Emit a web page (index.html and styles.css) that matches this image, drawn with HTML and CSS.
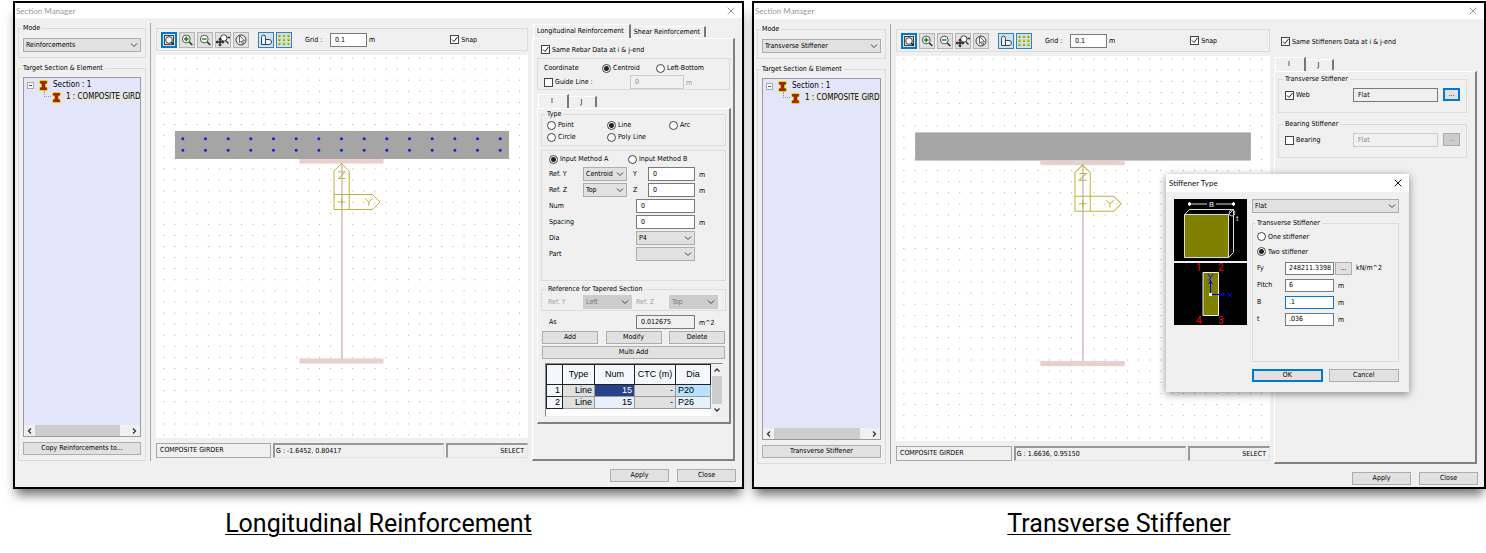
FILE: index.html
```
<!DOCTYPE html>
<html lang="en">
<head>
<meta charset="utf-8">
<title>Section Manager</title>
<link rel="stylesheet" href="styles.css">
</head>
<body>
<svg class="defs" aria-hidden="true">
  <symbol id="i-fit" viewBox="0 0 12 12"><rect x="1.500" y="1.500" width="9" height="9" fill="#d8d8d8" stroke="#444"/><circle cx="6" cy="6" r="3.300" fill="#fafafa" stroke="#444"/><path d="M8.300 8.300l2.200 2.200" stroke="#111" stroke-width="1.600"/></symbol>
  <symbol id="i-in" viewBox="0 0 14 14"><circle cx="6.300" cy="6" r="3.900" fill="#fff" stroke="#555"/><path d="M9.300 9l3 3" stroke="#333" stroke-width="1.700"/><path d="M4 6h4.600M6.300 3.700v4.600" stroke="#0a8a0a" stroke-width="1.600"/></symbol>
  <symbol id="i-out" viewBox="0 0 14 14"><circle cx="6.300" cy="6" r="3.900" fill="#fff" stroke="#555"/><path d="M9.300 9l3 3" stroke="#333" stroke-width="1.700"/><path d="M4 6h4.600" stroke="#0a8a0a" stroke-width="1.400"/></symbol>
  <symbol id="i-dyn" viewBox="0 0 14 14"><circle cx="7.800" cy="5" r="3.200" fill="#fff" stroke="#444"/><path d="M10 8l2.500 2.500M11.500 4.500H14" stroke="#333" stroke-width="1.400"/><path d="M4 5.500v7M.5 9h7" stroke="#222" stroke-width="1.400"/><path d="M4 4.500l-2 2h4zM4 13.500l-2-2h4zM-.5 9l2-2v4zM8.500 9l-2-2v4z" fill="#222"/></symbol>
  <symbol id="i-sel" viewBox="0 0 14 14"><circle cx="7" cy="7" r="5" fill="#eee" stroke="#444"/><path d="M5.500 2.500v7l1.600-1.400 1.300 2.900 1.300-.6-1.300-2.700h2.100z" fill="#fff" stroke="#444" stroke-width=".8"/></symbol>
  <symbol id="i-shape" viewBox="0 0 14 14"><path d="M2.500 11.500v-7Q2.500 2 4.500 2t2 2.500v7M6.500 6.500H10q2.500 0 2.500 2.500t-2.500 2.500H2.500" fill="#eef6fc" stroke="#3a444c"/></symbol>
  <symbol id="i-grid" viewBox="0 0 14 14"><path d="M2.500 1.500v12M7 1.500v12M11.500 1.500v12" stroke="#c8c400" stroke-width="2.600" stroke-dasharray="2.500 1.500"/><path d="M2.500 3v10M7 3v10M11.500 3v10" stroke="#77771c" stroke-dasharray="1 3"/></symbol>
  <symbol id="i-beam" viewBox="0 0 10 12"><path d="M0 0h10v4H8v4h2v4H0V8h2V4H0z" fill="#f1ee1b"/><path d="M1.500 1.300h7v2.200h-2v5h2v2.200h-7V8.500h2v-5h-2z" fill="#d30c0c" stroke="#421" stroke-width=".7"/></symbol>
  <symbol id="i-x" viewBox="0 0 8 8"><path d="M.7.7l6.600 6.600M7.300.7L.7 7.300" stroke="currentColor" fill="none"/></symbol>
  <symbol id="i-left" viewBox="0 0 8 8"><path d="M5.500 1.500L3 4l2.500 2.500" stroke="#333" stroke-width="1.300" fill="none"/></symbol>
  <symbol id="i-right" viewBox="0 0 8 8"><path d="M2.500 1.500L5 4 2.500 6.500" stroke="#333" stroke-width="1.300" fill="none"/></symbol>
  <symbol id="i-up" viewBox="0 0 8 8"><path d="M1.500 5.500L4 3l2.500 2.500" stroke="#333" stroke-width="1.300" fill="none"/></symbol>
  <symbol id="i-down" viewBox="0 0 8 8"><path d="M1.500 2.500L4 5l2.500-2.500" stroke="#333" stroke-width="1.300" fill="none"/></symbol>
  <pattern id="dots" width="11.12" height="11.09" patternUnits="userSpaceOnUse" x="6.800" y="2.500"><rect width="1" height="1" fill="#f08c8c"/></pattern>
  <symbol id="girder" viewBox="0 0 371 383">
    <rect x="143" y="104" width="84" height="4.500" fill="#e6d0d0"/>
    <rect x="184.500" y="108" width="1.800" height="196" fill="#dfc4c6"/>
    <rect x="143" y="303.500" width="84" height="5" fill="#e6d0d0"/>
    <g fill="none" stroke="#b9b53c"><path d="M177.500 154.500V116l7.500-7.500 7.700 7.500v38.500M177.500 154.500H216l7.500-7.500-7.500-7.500h-38.500"/><path d="M181.500 147h7.500M185.300 143.500v7.500M181.700 117h7l-7 6.500h7.300M208.500 143.500l3.800 3.500 3.700-3.500M212.300 147v4"/></g>
  </symbol>
</svg>

<main class="page">
<figure class="shot">
<section class="window">
  <header class="titlebar"><span>Section Manager</span><button class="close" aria-label="Close window"><svg><use href="#i-x"/></svg></button></header>
  <div class="body">
    <aside class="side">
      <fieldset><legend>Mode</legend>
        <select class="field wide" aria-label="Mode"><option>Reinforcements</option></select>
      </fieldset>
      <fieldset class="grow"><legend>Target Section &amp; Element</legend>
        <div class="tree">
          <ul>
            <li><span class="expander"></span><svg class="beam"><use href="#i-beam"/></svg><span>Section : 1</span></li>
            <li class="child"><span class="elbow"></span><svg class="beam"><use href="#i-beam"/></svg><span class="picked">1 : COMPOSITE GIRD</span></li>
          </ul>
          <div class="hscroll"><svg><use href="#i-left"/></svg><i></i><svg><use href="#i-right"/></svg></div>
        </div>
        <button class="btn">Copy Reinforcements to...</button>
      </fieldset>
    </aside>
    <div class="splitter"></div>
    <div class="center">
      <div class="toolbar">
        <button class="tool focus" aria-label="Zoom fit"><svg><use href="#i-fit"/></svg></button>
        <button class="tool" aria-label="Zoom in"><svg><use href="#i-in"/></svg></button>
        <button class="tool" aria-label="Zoom out"><svg><use href="#i-out"/></svg></button>
        <button class="tool" aria-label="Dynamic zoom"><svg><use href="#i-dyn"/></svg></button>
        <button class="tool" aria-label="Select"><svg><use href="#i-sel"/></svg></button>
        <button class="tool on first" aria-label="Show section"><svg><use href="#i-shape"/></svg></button>
        <button class="tool on" aria-label="Show grid"><svg><use href="#i-grid"/></svg></button>
        <label class="gridlabel" for="g1">Grid :</label><input class="field gridsize" id="g1" value="0.1"><span>m</span>
        <label class="check snap"><input type="checkbox" checked>Snap</label>
      </div>
      <svg class="canvas" viewBox="0 0 371 383">
        <rect x="18.500" y="76" width="334" height="28" fill="#a5a5a5"/>
        <rect width="371" height="383" fill="url(#dots)"/>
        <use href="#girder" width="371" height="383"/>
        <g fill="none" stroke="#1c1ccc" stroke-width="3" stroke-linecap="round" stroke-dasharray="0 22.670"><path d="M26.300 83.700H344.500M26.300 95.300H344.500"/></g>
      </svg>
      <div class="status"><span>COMPOSITE GIRDER</span><span>G : -1.6452, 0.80417</span><span>SELECT</span></div>
    </div>
    <div class="right">
      <div class="tabs"><button class="tab active">Longitudinal Reinforcement</button><button class="tab">Shear Reinforcement</button></div>
      <div class="panel outer">
        <label class="check same"><input type="checkbox" checked>Same Rebar Data at i &amp; j-end</label>
        <div class="group coord">
          <span>Coordinate</span><label class="check"><input type="radio" name="co" checked>Centroid</label><label class="check"><input type="radio" name="co">Left-Bottom</label>
          <label class="check"><input type="checkbox">Guide Line :</label><input class="field off guide" value="0" disabled aria-label="Guide line"><span class="unit dim">m</span>
        </div>
        <div class="tabs small"><button class="tab active">I</button><button class="tab">J</button></div>
        <div class="panel inner">
          <fieldset class="type"><legend>Type</legend>
            <label class="check"><input type="radio" name="ty">Point</label><label class="check"><input type="radio" name="ty" checked>Line</label><label class="check"><input type="radio" name="ty">Arc</label>
            <label class="check"><input type="radio" name="ty">Circle</label><label class="check"><input type="radio" name="ty">Poly Line</label>
          </fieldset>
          <div class="group method">
            <div class="ways"><label class="check"><input type="radio" name="me" checked>Input Method A</label><label class="check"><input type="radio" name="me">Input Method B</label></div>
            <div class="row"><label for="ry">Ref. Y</label><select class="field ref" id="ry"><option>Centroid</option></select><label class="axis" for="vy">Y</label><input class="field short" id="vy" value="0"><span class="unit">m</span></div>
            <div class="row"><label for="rz">Ref. Z</label><select class="field ref" id="rz"><option>Top</option></select><label class="axis" for="vz">Z</label><input class="field short" id="vz" value="0"><span class="unit">m</span></div>
            <div class="row"><label for="nu">Num</label><input class="field value" id="nu" value="0"><span class="unit"></span></div>
            <div class="row"><label for="sp">Spacing</label><input class="field value" id="sp" value="0"><span class="unit">m</span></div>
            <div class="row"><label for="di">Dia</label><select class="field value" id="di"><option>P4</option></select><span class="unit"></span></div>
            <div class="row"><label for="pa">Part</label><select class="field value" id="pa"><option></option></select><span class="unit"></span></div>
          </div>
          <fieldset class="taper"><legend>Reference for Tapered Section</legend>
            <label class="dim" for="ty1">Ref. Y</label><select class="field" id="ty1" disabled><option>Left</option></select><label class="dim" for="tz1">Ref. Z</label><select class="field" id="tz1" disabled><option>Top</option></select>
          </fieldset>
          <div class="row as"><label for="as">As</label><input class="field value plain" id="as" value="0.012675" readonly><span class="unit">m^2</span></div>
          <div class="actions"><button class="btn">Add</button><button class="btn">Modify</button><button class="btn">Delete</button><button class="btn all">Multi Add</button></div>
          <div class="sheet">
            <table>
              <thead><tr><th class="c0"></th><th class="c1">Type</th><th class="c2">Num</th><th class="c3">CTC (m)</th><th>Dia</th></tr></thead>
              <tbody>
                <tr><th>1</th><td class="ro">Line</td><td class="cursor">15</td><td class="ro">-</td><td class="dia hot">P20</td></tr>
                <tr><th>2</th><td class="ro">Line</td><td>15</td><td class="ro">-</td><td class="dia">P26</td></tr>
              </tbody>
            </table>
            <div class="vscroll"><svg><use href="#i-up"/></svg><i></i><svg><use href="#i-down"/></svg></div>
          </div>
        </div>
      </div>
    </div>
  </div>
  <footer class="foot"><button class="btn">Apply</button><button class="btn">Close</button></footer>
</section>
<figcaption>Longitudinal Reinforcement</figcaption>
</figure>

<figure class="shot">
<section class="window second">
  <header class="titlebar"><span>Section Manager</span><button class="close" aria-label="Close window"><svg><use href="#i-x"/></svg></button></header>
  <div class="body">
    <aside class="side">
      <fieldset><legend>Mode</legend>
        <select class="field wide" aria-label="Mode"><option>Transverse Stiffener</option></select>
      </fieldset>
      <fieldset class="grow"><legend>Target Section &amp; Element</legend>
        <div class="tree">
          <ul>
            <li><span class="expander"></span><svg class="beam"><use href="#i-beam"/></svg><span>Section : 1</span></li>
            <li class="child"><span class="elbow"></span><svg class="beam"><use href="#i-beam"/></svg><span class="picked">1 : COMPOSITE GIRD</span></li>
          </ul>
          <div class="hscroll"><svg><use href="#i-left"/></svg><i></i><svg><use href="#i-right"/></svg></div>
        </div>
        <button class="btn">Transverse Stiffener</button>
      </fieldset>
    </aside>
    <div class="splitter"></div>
    <div class="center">
      <div class="toolbar">
        <button class="tool focus" aria-label="Zoom fit"><svg><use href="#i-fit"/></svg></button>
        <button class="tool" aria-label="Zoom in"><svg><use href="#i-in"/></svg></button>
        <button class="tool" aria-label="Zoom out"><svg><use href="#i-out"/></svg></button>
        <button class="tool" aria-label="Dynamic zoom"><svg><use href="#i-dyn"/></svg></button>
        <button class="tool" aria-label="Select"><svg><use href="#i-sel"/></svg></button>
        <button class="tool on first" aria-label="Show section"><svg><use href="#i-shape"/></svg></button>
        <button class="tool on" aria-label="Show grid"><svg><use href="#i-grid"/></svg></button>
        <label class="gridlabel" for="g2">Grid :</label><input class="field gridsize" id="g2" value="0.1"><span>m</span>
        <label class="check snap"><input type="checkbox" checked>Snap</label>
      </div>
      <svg class="canvas" viewBox="0 0 371 383">
        <rect x="18.500" y="76" width="334" height="28" fill="#a5a5a5"/>
        <rect width="371" height="383" fill="url(#dots)"/>
        <use href="#girder" width="371" height="383"/>
      </svg>
      <div class="status"><span>COMPOSITE GIRDER</span><span>G : 1.6636, 0.95150</span><span>SELECT</span></div>
    </div>
    <div class="right">
      <label class="check same"><input type="checkbox" checked>Same Stiffeners Data at i &amp; j-end</label>
      <div class="tabs small"><button class="tab active">I</button><button class="tab">J</button></div>
      <div class="panel outer">
        <fieldset class="stiff"><legend>Transverse Stiffener</legend>
          <label class="check"><input type="checkbox" checked>Web</label><input class="field plain" value="Flat" readonly aria-label="Web stiffener"><button class="btn dots focus">...</button>
        </fieldset>
        <fieldset class="stiff"><legend>Bearing Stiffener</legend>
          <label class="check"><input type="checkbox">Bearing</label><input class="field off" value="Flat" disabled aria-label="Bearing stiffener"><button class="btn dots" disabled>...</button>
        </fieldset>
      </div>
    </div>
  </div>
  <footer class="foot"><button class="btn">Apply</button><button class="btn">Close</button></footer>

  <div class="dialog" role="dialog" aria-label="Stiffener Type">
    <header class="titlebar"><span>Stiffener Type</span><button class="close" aria-label="Close dialog"><svg><use href="#i-x"/></svg></button></header>
    <div class="dialog-body">
      <div class="previews">
        <svg viewBox="0 0 73 62"><rect width="73" height="62"/><path d="M10.500 15.500h44v43h-44z" fill="#808000" stroke="#ddd"/><path d="M10.500 15.500l5-5h44l-5 5M59.500 10.500v43l-5 5M15.500 3v4M59.500 3v4M15.500 5H33M42 5h17.500" fill="none" stroke="#ddd"/><path d="M14 5h3M58 5h3" stroke="#fff" stroke-width="2.500"/><circle cx="58" cy="14" r="3" fill="none" stroke="#bbb"/><text x="35" y="8" fill="#eee" font-size="8">B</text><text x="62" y="22" fill="#ddd" font-size="8">t</text></svg>
        <svg viewBox="0 0 73 62"><rect width="73" height="62"/><path d="M29 9.500h15.500v43H29z" fill="#808000" stroke="#eee"/><g fill="#f00" font-size="10"><text x="22" y="8">1</text><text x="44" y="8">2</text><text x="22" y="61">4</text><text x="44" y="61">3</text></g><g fill="none" stroke="#00f"><path d="M36.500 31V17M36.500 31.500H50M34.500 21l2-3 2 3M48 29.500l3 2-3 2M53.500 29.500l5 5M58.500 29.500l-5 5M34 11l2.500 3.500L39 11M36.500 14.500l-1.500 3"/></g><rect x="35" y="30" width="3" height="3" fill="#fff"/></svg>
      </div>
      <div class="form">
        <select class="field wide" aria-label="Stiffener type"><option>Flat</option></select>
        <fieldset><legend>Transverse Stiffener</legend>
          <label class="check"><input type="radio" name="st">One stiffener</label>
          <label class="check"><input type="radio" name="st" checked>Two stiffener</label>
          <div class="line"><label for="fy">Fy</label><input class="field" id="fy" value="248211.3398"><button class="btn dots">...</button><span>kN/m^2</span></div>
          <div class="line"><label for="pi">Pitch</label><input class="field" id="pi" value="6"><span class="unit">m</span></div>
          <div class="line"><label for="bb">B</label><input class="field editing" id="bb" value=".1"><span class="unit">m</span></div>
          <div class="line"><label for="tt">t</label><input class="field" id="tt" value=".036"><span class="unit">m</span></div>
        </fieldset>
        <div class="confirm"><button class="btn focus">OK</button><button class="btn">Cancel</button></div>
      </div>
    </div>
  </div>
</section>
<figcaption>Transverse Stiffener</figcaption>
</figure>
</main>
</body>
</html>
```
FILE: styles.css
```
* { box-sizing: border-box; }
body { margin: 0; background: #fff; color: #000; }
.defs { position: absolute; width: 0; height: 0; }
.page { min-height: 100vh; display: grid; grid-template-columns: 731fr 734fr; gap: 8px; padding: 1px 0 0 13px; }
.shot { margin: 0; display: flex; flex-direction: column; min-width: 0; }
figcaption { height: 64px; padding-top: 20px; text-align: center; font: 25px/30px Roboto, sans-serif; color: #000; text-decoration: underline; text-decoration-thickness: 1px; text-underline-offset: 2px; }

.window { position: relative; flex: 1; display: flex; flex-direction: column; border: 2px solid #000; background: #f0f0f0; box-shadow: 0 9px 10px -3px rgba(0, 0, 0, .55); font: 7px/10px "DejaVu Sans Condensed", "DejaVu Sans", sans-serif; }
button, input, select { font: inherit; color: inherit; margin: 0; padding: 0; }
.titlebar { height: 15px; display: flex; align-items: center; justify-content: space-between; padding: 0 7px 0 1px; background: #fff; color: #9a9a9a; font: 8px/10px Lato, sans-serif; }
.close { border: 0; background: none; display: flex; }
.close svg { width: 8px; height: 8px; }
.body { flex: 1; display: flex; padding: 5px 7px 0 3px; }
.side { width: 128px; display: flex; flex-direction: column; gap: 5px; }
fieldset { margin: 0; border: 1px solid #dcdcdc; padding: 5px 4px; min-width: 0; }
legend { padding: 0 2px; margin-left: -2px; line-height: 10px; }
.grow { flex: 1; display: flex; flex-direction: column; padding: 4px 4px 5px; }
.field { height: 14px; border: 1px solid #7a7a7a; border-radius: 0; background: #fff; padding: 0 0 0 4px; min-width: 0; outline: 0; }
select.field { appearance: none; border-color: #adadad; padding: 0 12px 0 2px; background: #e1e1e1 url("data:image/svg+xml,%3Csvg xmlns='http://www.w3.org/2000/svg' width='8' height='6'%3E%3Cpath d='M1 1.500l3 3 3-3' fill='none' stroke='%23444'/%3E%3C/svg%3E") no-repeat right 2px center; }
select.field:disabled { background-color: #ccc; border-color: #ccc; color: #777; opacity: 1; }
.wide { width: 100%; display: block; }
.off { background: #f0f0f0; border-color: #ccc; color: #888; }
.plain { background: #f0f0f0; }
.dim { color: #a0a0a0; }
.btn { height: 13px; border: 1px solid #adadad; background: #e1e1e1; line-height: 11px; text-align: center; }
.btn.focus { border: 2px solid #0078d7; line-height: 9px; }
.tree { flex: 1; display: flex; flex-direction: column; justify-content: space-between; margin-bottom: 5px; border: 1px solid #9a9aa0; background: #e4e4fa; font-size: 8px; }
.tree ul { list-style: none; margin: 0; padding: 1px 0 0 3px; overflow: hidden; }
.tree li { display: flex; align-items: center; height: 12px; white-space: nowrap; }
.expander { width: 7px; height: 7px; border: 1px solid #aaa; background: linear-gradient(#555, #555) center / 3px 1px no-repeat #fff; margin-right: 5px; }
.beam { width: 9px; height: 11px; margin-right: 5px; flex: none; }
.child { padding-left: 17px; }
.elbow { width: 7px; height: 6px; border: 1px dotted #999; border-width: 0 0 1px 1px; margin: 0 1px 6px 0; flex: none; }
.picked { background: #e6e6e6; flex: 1; }
.hscroll { display: flex; align-items: center; height: 11px; background: #f0f0f0; justify-content: space-between; }
.hscroll svg { width: 11px; height: 8px; }
.hscroll i { height: 11px; flex: 1; margin-right: 9px; background: #cdcdcd; }
.splitter { width: 1px; background: #a6a6a6; margin: 0 5px 0 4px; }
.center { flex: 1; min-width: 0; display: flex; flex-direction: column; }
.toolbar { margin: 5px 0 4px; height: 23px; border: 1px solid #dcdcdc; display: flex; align-items: center; padding: 0 4px; gap: 2px; }
.tool { width: 16px; height: 16px; border: 1px solid #b4b4b4; background: #e1e1e1; display: flex; }
.tool svg { width: 14px; height: 14px; }
.tool.focus { border: 2px solid #0078d7; }
.tool.focus svg { width: 12px; height: 12px; }
.tool.on { border-color: #3c7fb1; background: #cce4f7; }
.tool.first { margin-left: 7px; }
.gridlabel { width: 23px; margin-left: 11px; white-space: nowrap; }
.gridsize { width: 37px; }
.check { display: flex; align-items: center; gap: 2px; white-space: nowrap; }
.check input { appearance: none; width: 9px; height: 9px; border: 1px solid #444; background: #fff; flex: none; }
.check input[type=checkbox]:checked { background: #fff url("data:image/svg+xml,%3Csvg xmlns='http://www.w3.org/2000/svg' width='7' height='7'%3E%3Cpath d='M1 3.500l2 2L6.500 1' fill='none' stroke='%23222'/%3E%3C/svg%3E") center no-repeat; }
.check input[type=radio] { border-radius: 50%; }
.check input[type=radio]:checked { background: radial-gradient(#222 2px, #fff 3px); }
.snap { margin: 0 auto 0 73px; }
.canvas { flex: 1 1 0; min-height: 0; width: 100%; background: #fff; }
.status { display: grid; grid-template-columns: 115fr 171fr 82fr; gap: 2px; margin: 5px 0 3px; }
.status span { height: 15px; line-height: 12px; padding: 0 3px 0 1px; border: 1px solid #e4e4e4; border-top: 2px solid #999; border-left: 2px solid #999; }
.status span:first-child { border: 1px solid #a8a8a8; line-height: 13px; padding-left: 3px; }
.status span:last-child { text-align: right; }
.right { width: 203px; margin-left: 4px; display: flex; flex-direction: column; }
.tabs { display: flex; align-items: flex-end; height: 15px; padding-left: 1px; }
.tab { border: 0; border-top: 1px solid #fff; border-right: 2px solid #777; background: none; height: 11px; line-height: 10px; padding: 0 4px 0 3px; margin-bottom: 1px; white-space: nowrap; }
.tab.active { height: 14px; line-height: 13px; margin: 0; border-left: 1px solid #fff; padding: 0 5px 0 3px; }
.tabs.small { height: 14px; }
.tabs.small .tab { width: 28px; }
.tabs.small .tab.active { width: 31px; }
.panel { border: 1px solid #fff; border-right: 2px solid #808080; border-bottom: 2px solid #808080; }
.outer { flex: 1; padding: 5px 3px 0 4px; }
.same { height: 11px; margin-left: 4px; }
.group { border: 1px solid #dcdcdc; }
.coord { margin-top: 3px; height: 32px; padding: 2px 0 0 6px; display: grid; grid-template-columns: 58px 28px 26px 1fr; grid-template-rows: 14px 14px; align-items: center; }
.coord .check:nth-child(3) { grid-column: 3 / 5; margin-left: 26px; }
.coord .check:nth-child(4) { grid-column: 1 / 3; }
.guide { width: 54px; }
.coord .unit { margin-left: 26px; }
.outer > .tabs.small { margin-top: 4px; }
.inner { height: 316px; padding: 0 3px; margin-right: -1px; }
.type { height: 37px; display: grid; grid-template-columns: 60px 62px 1fr; align-items: center; padding: 0 5px 2px; }
.method { margin-top: 4px; height: 131px; padding: 1px 6px 0 7px; }
.ways { display: grid; grid-template-columns: 79px 1fr; height: 14px; }
.row { display: flex; align-items: center; height: 16px; }
.row label:first-child { flex: 1; }
.ref { width: 44px; }
.axis { width: 21px; padding-left: 6px; }
.short { width: 47px; }
.value { width: 59px; }
.unit { width: 24px; padding: 2px 0 0 4px; }
.taper { height: 27px; margin-top: 3px; display: grid; grid-template-columns: 35px 49px 37px 49px; align-items: center; padding: 0 0 1px 6px; }
.taper label:nth-of-type(2) { padding-left: 4px; }
.row.as { padding: 0 7px 0 8px; margin: 3px 0 1px; }
.actions { display: grid; grid-template-columns: repeat(3, 56px); justify-content: space-between; gap: 2px; padding: 0 1px; }
.all { grid-column: 1 / 4; }
.sheet { display: flex; margin: 4px 3px 0 4px; border: 1px solid #888; border-right-color: #eee; border-bottom-color: #eee; background: #fff; height: 54px; }
table { width: 165px; border-collapse: collapse; table-layout: fixed; font: 9px/11px "Liberation Sans", sans-serif; align-self: flex-start; }
th, td { border: 1px solid #999; padding: 0 2px; height: 12px; text-align: right; background: #e8f0fc; }
th { font-weight: 400; background: #f4f7fc; border-color: #222; }
thead th { text-align: center; height: 20px; padding: 0; }
.c0 { width: 16px; } .c1 { width: 32px; } .c2 { width: 40px; } .c3 { width: 41px; }
td.ro { background: #e0e0e0; }
td.cursor { background: #26408b; color: #fff; }
td.dia { text-align: left; }
td.hot { background: #b8e2ff; }
.vscroll { flex: 1; display: flex; flex-direction: column; align-items: center; background: #f0f0f0; }
.vscroll svg { width: 8px; height: 12px; }
.vscroll i { width: 10px; flex: 1; background: #cdcdcd; }
.foot { display: flex; justify-content: flex-end; gap: 8px; padding: 8px 6px 5px; }
.foot .btn { width: 59px; }

.second .titlebar { height: 16px; }
.second .side { width: 129px; }
.second .foot { padding-bottom: 2px; }
.second .right > .same { margin: 12px 0 10px 7px; }
.second .outer { padding: 2px 8px 0 3px; }
.stiff { display: grid; grid-template-columns: 63px 85px 16px; column-gap: 5px; align-items: start; height: 39px; padding: 4px 5px 0 6px; margin-bottom: 6px; }
.stiff .check { height: 14px; margin-right: -1px; }
.dots { width: 17px; }
.dots:disabled { background: #ccc; color: #888; }

.dialog { position: absolute; top: 171px; right: 75px; width: 243px; background: #f0f0f0; box-shadow: 0 2px 8px rgba(0, 0, 0, .45); }
.second .dialog .titlebar { height: 18px; color: #111; padding-left: 3px; }
.dialog-body { display: flex; gap: 5px; padding: 7px 10px 10px 8px; }
.previews { width: 73px; display: flex; flex-direction: column; gap: 2px; }
.previews svg { width: 73px; height: 62px; font-family: Roboto, sans-serif; }
.form { flex: 1; min-width: 0; }
.form fieldset { margin-top: 5px; height: 144px; padding: 1px 4px; }
.form .check { height: 15px; }
.line { display: flex; align-items: center; height: 16px; margin-top: 1px; }
.line label { width: 28px; }
.line .field { width: 49px; height: 13px; padding-left: 3px; }
.line .btn { margin: 0 4px 0 1px; }
.line .editing { border-color: #0078d7; }
.confirm { display: grid; grid-template-columns: 1fr 1fr; gap: 6px; margin-top: 7px; }
```
